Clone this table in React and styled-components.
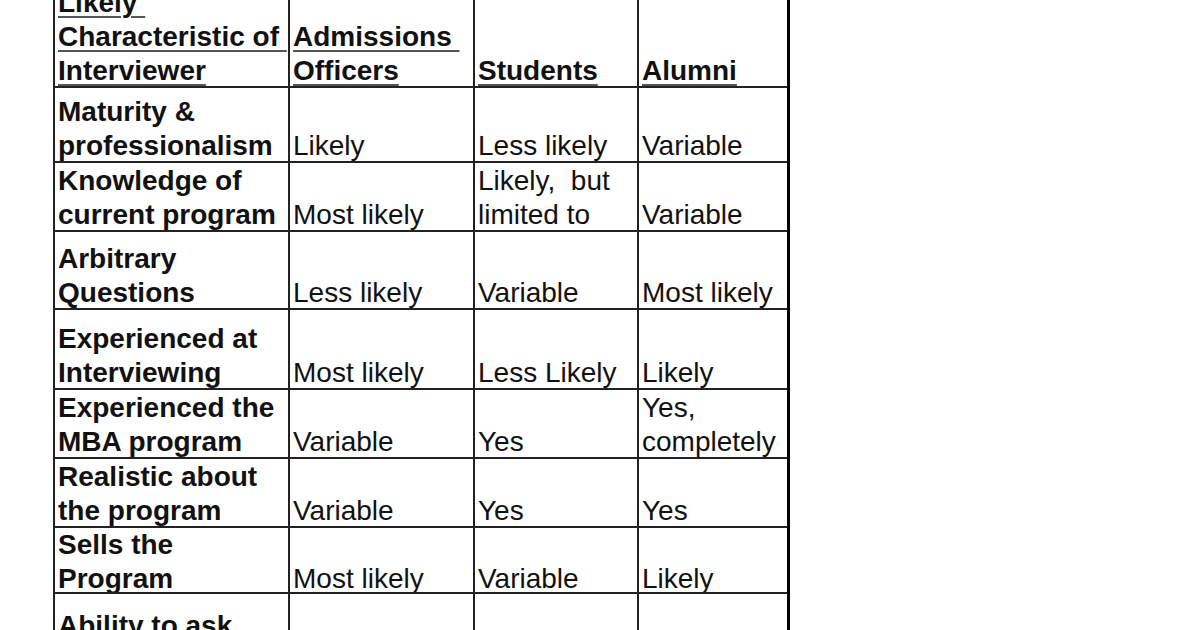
import React from 'react';
import styled, { createGlobalStyle } from 'styled-components';

const GlobalStyle = createGlobalStyle`
  html, body {
    margin: 0;
    padding: 0;
    background: #ffffff;
    overflow: hidden;
  }
`;

const Page = styled.div`
  width: 1200px;
  height: 630px;
  overflow: hidden;
  background: #ffffff;
  padding-left: 53px;
  box-sizing: border-box;
`;

const Table = styled.table`
  margin-top: -21px;
  table-layout: fixed;
  width: 734px;
  border-collapse: collapse;
  font-family: 'Liberation Sans', Arial, sans-serif;
  font-size: 28px;
  line-height: 34px;
  color: #111111;
`;

const Row = styled.tr`
  height: ${({ $h }) => $h}px;
`;

const Cell = styled.td`
  border: 2px solid #222222;
  padding: 0 0 0 3px;
  vertical-align: bottom;
  white-space: pre;
  overflow: hidden;
  font-weight: ${({ $bold }) => ($bold ? 700 : 400)};
  &:last-child {
    border-right: 3px solid #000000;
  }
`;

const Stack = styled.div`
  margin-bottom: ${({ $tight }) => ($tight ? -4 : -2)}px;
`;

const Line = styled.span`
  display: block;
`;

const HeadText = styled.span`
  text-decoration: underline;
  text-decoration-thickness: 1.5px;
  text-decoration-color: #555555;
  text-underline-offset: 4px;
`;

const header = [
  ['Likely\u00a0', 'Characteristic of\u00a0', 'Interviewer'],
  ['Admissions\u00a0', 'Officers'],
  ['Students'],
  ['Alumni'],
];

const rows = [
  { h: 75, label: ['Maturity &', 'professionalism'], values: ['Likely', 'Less likely', 'Variable'] },
  { h: 69, label: ['Knowledge of', 'current program'], values: ['Most likely', ['Likely,  but', 'limited to'], 'Variable'] },
  { h: 78, label: ['Arbitrary', 'Questions'], values: ['Less likely', 'Variable', 'Most likely'] },
  { h: 80, label: ['Experienced at', 'Interviewing'], values: ['Most likely', 'Less Likely', 'Likely'] },
  { h: 69, label: ['Experienced the', 'MBA program'], values: ['Variable', 'Yes', ['Yes,', 'completely']] },
  { h: 69, label: ['Realistic about', 'the program'], values: ['Variable', 'Yes', 'Yes'] },
  { h: 66, tight: true, label: ['Sells the', 'Program'], values: ['Most likely', 'Variable', 'Likely'] },
  { h: 117, label: ['Ability to ask', 'probing', 'questions'], values: ['', '', ''] },
];

const Lines = ({ text, tight }) => {
  const list = Array.isArray(text) ? text : [text];
  return (
    <Stack $tight={tight}>
      {list.map((t, i) => (
        <Line key={i}>{t}</Line>
      ))}
    </Stack>
  );
};

export default function App() {
  return (
    <Page>
      <GlobalStyle />
      <Table>
        <colgroup>
          <col style={{ width: 235 }} />
          <col style={{ width: 185 }} />
          <col style={{ width: 164 }} />
          <col style={{ width: 150 }} />
        </colgroup>
        <tbody>
          <Row $h={107}>
            {header.map((lines, i) => (
              <Cell $bold key={i}>
                <Stack>
                  {lines.map((t, j) => (
                    <Line key={j}>
                      <HeadText>{t}</HeadText>
                    </Line>
                  ))}
                </Stack>
              </Cell>
            ))}
          </Row>
          {rows.map((r, i) => (
            <Row $h={r.h} key={i}>
              <Cell $bold>
                <Lines text={r.label} tight={r.tight} />
              </Cell>
              {r.values.map((v, j) => (
                <Cell key={j}>
                  <Lines text={v} tight={r.tight} />
                </Cell>
              ))}
            </Row>
          ))}
        </tbody>
      </Table>
    </Page>
  );
}
